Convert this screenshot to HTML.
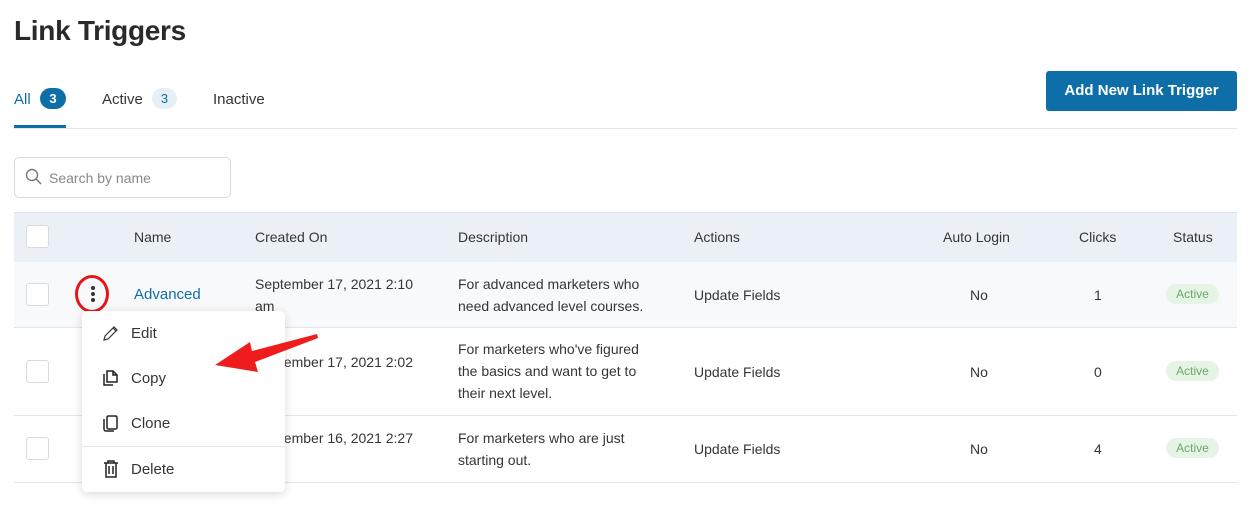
<!DOCTYPE html>
<html><head><meta charset="utf-8"><style>
*{box-sizing:border-box;margin:0;padding:0}
body{width:1251px;height:515px;background:#fff;font-family:"Liberation Sans",sans-serif;color:#353535;position:relative;overflow:hidden;font-size:14px}
.a{position:absolute}
h1{position:absolute;left:14px;top:15px;font-size:28px;font-weight:bold;color:#2a2a2a;letter-spacing:-0.3px}
.cb{position:absolute;width:23px;height:23px;border:1.5px solid #d7dbe0;border-radius:3px;background:#fff;left:26px}
.hline{position:absolute;left:14px;width:1223px;height:1px;background:#e2e6ea}
.t{position:absolute;font-size:14px;line-height:22px;color:#353535}
.badge{position:absolute;width:53px;height:20px;border-radius:10px;background:#e6f4e6;color:#6aa86a;font-size:12px;text-align:center;line-height:20px;left:1166px}
.mi{position:absolute;left:131px;font-size:15px;color:#353535}
</style></head><body>
<h1>Link Triggers</h1>
<div class="t" style="left:14px;top:89px;color:#0e6ea8;font-size:15px">All</div>
<div class="a" style="left:40px;top:88px;width:26px;height:21px;border-radius:11px;background:#0e6ea8;color:#fff;font-size:13px;text-align:center;line-height:21px;font-weight:bold">3</div>
<div class="t" style="left:102px;top:89px;font-size:15px">Active</div>
<div class="a" style="left:152px;top:88px;width:25px;height:21px;border-radius:11px;background:#e5eff5;color:#0e6ea8;font-size:13px;text-align:center;line-height:21px">3</div>
<div class="t" style="left:213px;top:89px;font-size:15px">Inactive</div>
<div class="a" style="left:14px;top:125px;width:52px;height:3px;background:#0e6ea8"></div>
<div class="hline" style="top:128px"></div>
<div class="a" style="left:1046px;top:71px;width:191px;height:40px;background:#0e6ea8;border-radius:3px;color:#fff;font-weight:bold;font-size:15px;text-align:center;line-height:40px">Add New Link Trigger</div>
<div class="a" style="left:14px;top:157px;width:217px;height:41px;border:1px solid #d7dbe0;border-radius:5px"></div>
<svg class="a" style="left:25px;top:168px" width="18" height="18" viewBox="0 0 18 18"><circle cx="7" cy="7" r="5.5" fill="none" stroke="#777" stroke-width="1.4"/><path d="M11 11l5 5" stroke="#777" stroke-width="1.4"/></svg>
<div class="t" style="left:49px;top:167px;color:#888">Search by name</div>

<div class="a" style="left:14px;top:212px;width:1223px;height:50px;background:#eaf0f5;border-top:1px solid #dde3e8"></div>
<div class="cb" style="top:225px"></div>
<div class="t" style="left:134px;top:226px">Name</div>
<div class="t" style="left:255px;top:226px">Created On</div>
<div class="t" style="left:458px;top:226px">Description</div>
<div class="t" style="left:694px;top:226px">Actions</div>
<div class="t" style="left:943px;top:226px">Auto Login</div>
<div class="t" style="left:1079px;top:226px">Clicks</div>
<div class="t" style="left:1173px;top:226px">Status</div>

<div class="a" style="left:14px;top:262px;width:1223px;height:66px;background:#f8f9fa"></div>
<div class="hline" style="top:327px"></div>
<div class="hline" style="top:415px"></div>
<div class="hline" style="top:482px"></div>

<div class="cb" style="top:283px"></div>
<div class="a" style="left:75px;top:275px;width:34px;height:38px;border:3px solid #e8141a;border-radius:50%"></div>
<div class="a" style="left:91px;top:286px;width:4px;height:4px;border-radius:2px;background:#333;box-shadow:0 6px #333,0 12px #333"></div>
<div class="t" style="left:134px;top:284px;color:#0e6ea8;font-size:15px">Advanced</div>
<div class="t" style="left:255px;top:273px">September 17, 2021 2:10<br>am</div>
<div class="t" style="left:458px;top:273px">For advanced marketers who<br>need advanced level courses.</div>
<div class="t" style="left:694px;top:284px">Update Fields</div>
<div class="t" style="left:970px;top:284px">No</div>
<div class="t" style="left:1094px;top:284px">1</div>
<div class="badge" style="top:284px">Active</div>

<div class="cb" style="top:360px"></div>
<div class="t" style="left:255px;top:351px">September 17, 2021 2:02</div>
<div class="t" style="left:458px;top:338px">For marketers who've figured<br>the basics and want to get to<br>their next level.</div>
<div class="t" style="left:694px;top:361px">Update Fields</div>
<div class="t" style="left:970px;top:361px">No</div>
<div class="t" style="left:1094px;top:361px">0</div>
<div class="badge" style="top:361px">Active</div>

<div class="cb" style="top:437px"></div>
<div class="t" style="left:255px;top:427px">September 16, 2021 2:27</div>
<div class="t" style="left:458px;top:427px">For marketers who are just<br>starting out.</div>
<div class="t" style="left:694px;top:438px">Update Fields</div>
<div class="t" style="left:970px;top:438px">No</div>
<div class="t" style="left:1094px;top:438px">4</div>
<div class="badge" style="top:438px">Active</div>

<div class="a" style="left:82px;top:311px;width:203px;height:181px;background:#fff;border-radius:5px;box-shadow:0 2px 10px rgba(0,0,0,.15)"></div>
<div class="a" style="left:82px;top:446px;width:203px;height:1px;background:#e6e6e6"></div>
<svg class="a" style="left:102px;top:324px" width="18" height="18" viewBox="0 0 18 18" fill="none" stroke="#333" stroke-width="1.2"><path d="M2 16l1-4L12 3l3 3-9 9z M11 4l3 3"/></svg>
<div class="mi" style="top:325px">Edit</div>
<svg class="a" style="left:102px;top:369px" width="18" height="18" viewBox="0 0 18 18" fill="none" stroke="#222" stroke-width="1.5"><path d="M5 2h6l4 4v7H5z M11 2v4h4"/><path d="M2 5v11h9"/></svg>
<div class="mi" style="top:370px">Copy</div>
<svg class="a" style="left:102px;top:414px" width="18" height="18" viewBox="0 0 18 18" fill="none" stroke="#222" stroke-width="1.5"><rect x="5" y="2" width="10" height="13" rx="1.5"/><path d="M2 5v10a2 2 0 0 0 2 2h8"/></svg>
<div class="mi" style="top:415px">Clone</div>
<svg class="a" style="left:102px;top:459px" width="18" height="20" viewBox="0 0 18 20" fill="none" stroke="#222" stroke-width="1.5"><path d="M2 4h14 M6 4V2h6v2 M4 4v14h10V4 M7 7v8 M11 7v8"/></svg>
<div class="mi" style="top:461px">Delete</div>

<svg class="a" style="left:210px;top:330px" width="112" height="45" viewBox="0 0 112 45"><path d="M107 4L42 21L40 12L5 35L48 42L45 32L108 8Z" fill="#ee1c1c"/></svg>
</body></html>
